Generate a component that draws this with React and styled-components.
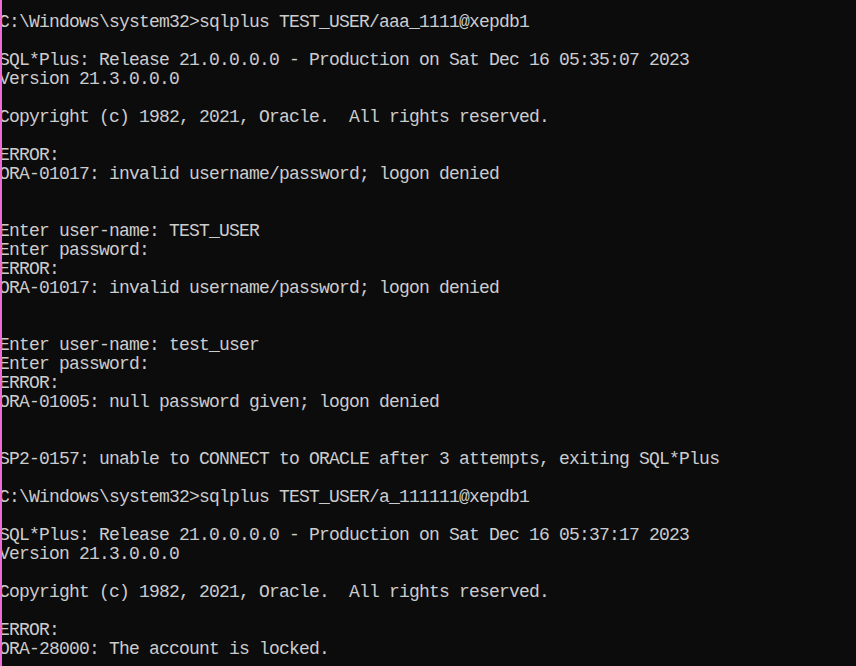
import React from "react";
import styled, { createGlobalStyle } from "styled-components";

const GlobalStyle = createGlobalStyle`
  html, body {
    margin: 0;
    padding: 0;
    background-color: #0c0c0c;
  }
  body {
    overflow: hidden;
  }
`;

const Console = styled.div`
  position: relative;
  width: 856px;
  height: 666px;
  background-color: #0c0c0c;
  overflow: hidden;
`;

// pink strip sits over the first column of the console text
const Edge = styled.div`
  position: absolute;
  top: 0;
  left: 0;
  bottom: 0;
  width: 2px;
  background-color: #ef6bd6;
`;

const Output = styled.pre`
  margin: 0 0 0 -1px;
  padding: 13px 0 0 0;
  font-family: "Liberation Mono", "DejaVu Sans Mono", monospace;
  font-size: 18px;
  letter-spacing: -0.8px;
  line-height: 19px;
  color: #cccccc;
  white-space: pre;
`;

const lines = [
  "C:\\Windows\\system32>sqlplus TEST_USER/aaa_1111@xepdb1",
  "",
  "SQL*Plus: Release 21.0.0.0.0 - Production on Sat Dec 16 05:35:07 2023",
  "Version 21.3.0.0.0",
  "",
  "Copyright (c) 1982, 2021, Oracle.  All rights reserved.",
  "",
  "ERROR:",
  "ORA-01017: invalid username/password; logon denied",
  "",
  "",
  "Enter user-name: TEST_USER",
  "Enter password:",
  "ERROR:",
  "ORA-01017: invalid username/password; logon denied",
  "",
  "",
  "Enter user-name: test_user",
  "Enter password:",
  "ERROR:",
  "ORA-01005: null password given; logon denied",
  "",
  "",
  "SP2-0157: unable to CONNECT to ORACLE after 3 attempts, exiting SQL*Plus",
  "",
  "C:\\Windows\\system32>sqlplus TEST_USER/a_111111@xepdb1",
  "",
  "SQL*Plus: Release 21.0.0.0.0 - Production on Sat Dec 16 05:37:17 2023",
  "Version 21.3.0.0.0",
  "",
  "Copyright (c) 1982, 2021, Oracle.  All rights reserved.",
  "",
  "ERROR:",
  "ORA-28000: The account is locked.",
];

const App = () => {
  return (
    <>
      <GlobalStyle />
      <Console>
        <Output>{lines.join("\n")}</Output>
        <Edge />
      </Console>
    </>
  );
};

export default App;
